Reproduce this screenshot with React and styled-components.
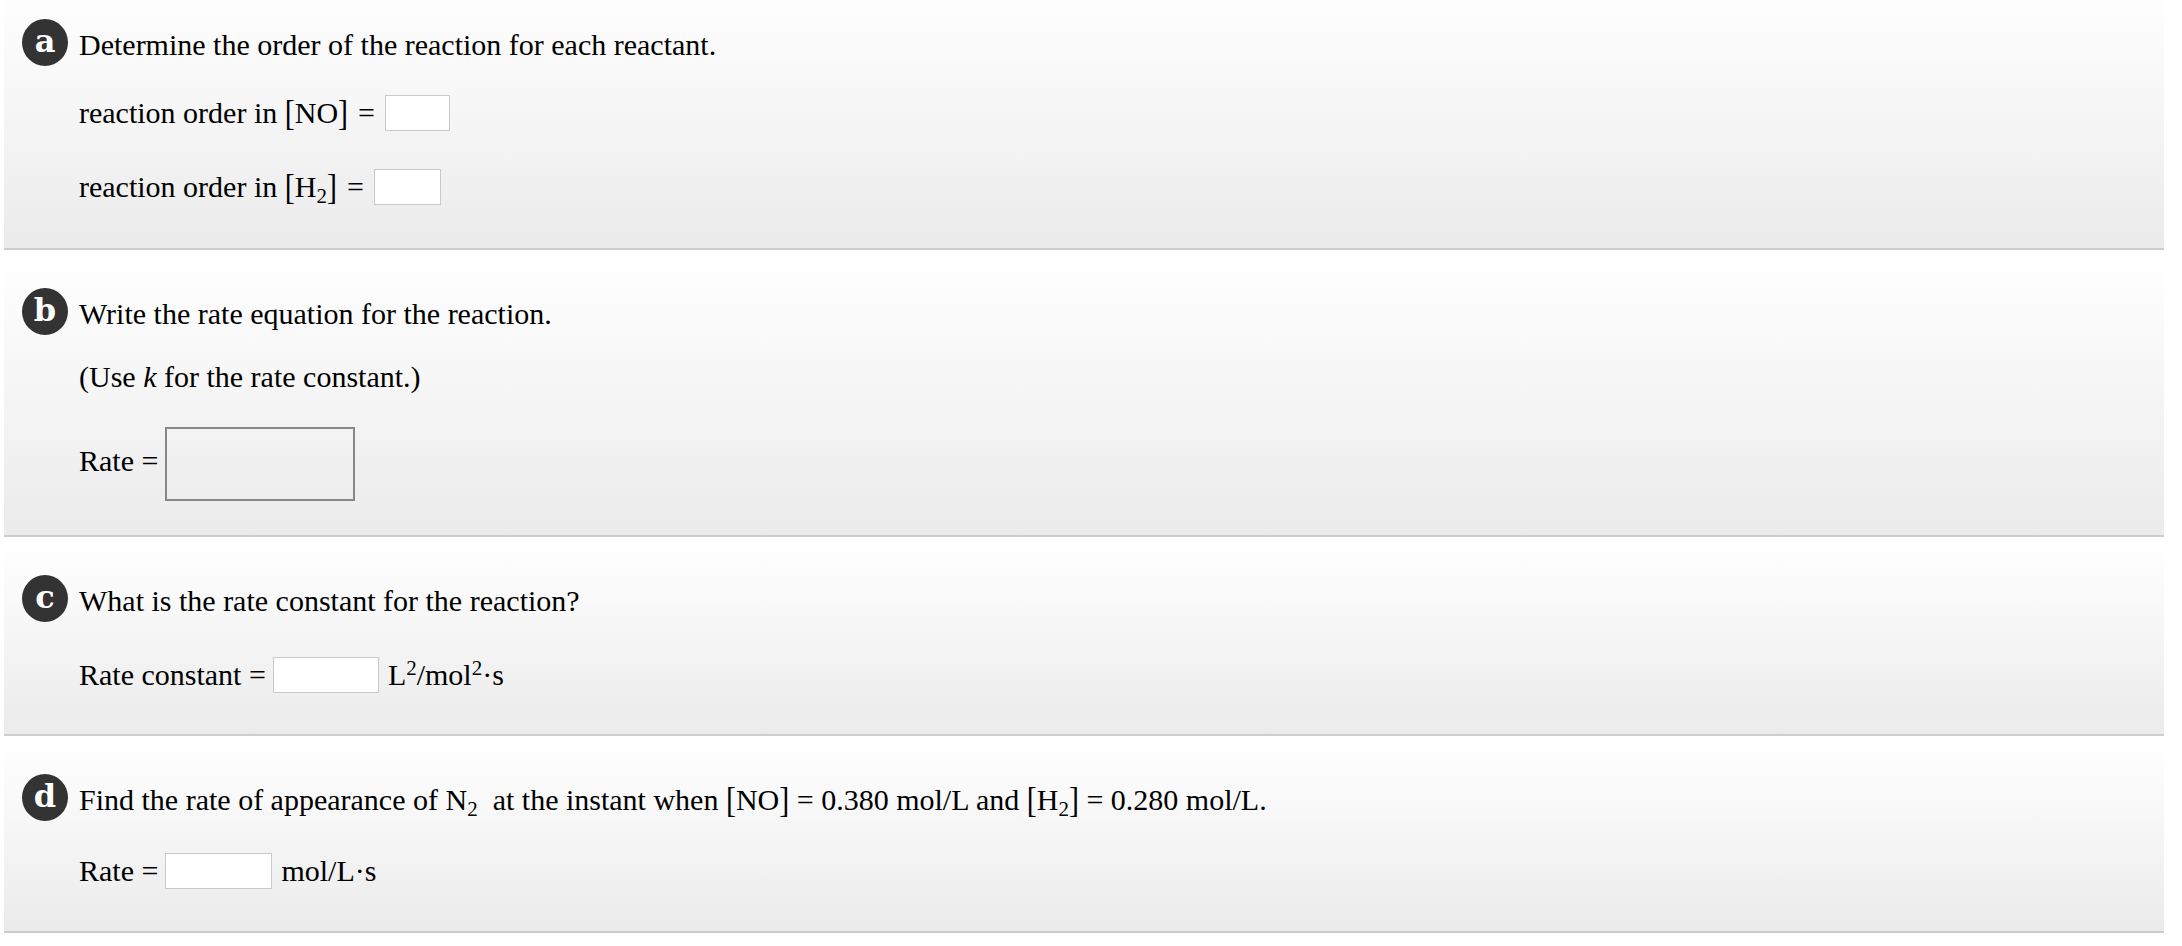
import React from 'react';
import styled, { createGlobalStyle } from 'styled-components';

const GlobalStyle = createGlobalStyle`
    html, body {
        margin: 0;
        padding: 0;
        background: #fff;
    }
    body {
        font-family: "Liberation Serif", "Times New Roman", serif;
        font-size: 30px;
        color: #000;
        overflow: hidden;
    }
`;

const Page = styled.div`
    padding: 0 18px 0 4px;
    margin-top: -19px;
`;

const Panel = styled.section`
    padding: 38px 0 ${props => props.bottom || 41}px 18px;
    background: linear-gradient(180deg, #ffffff 0%, #fcfcfc 18%, #ebebeb 100%);
    border-bottom: 2px solid #cdcdcd;
`;

const QuestionRow = styled.div`
    display: flex;
    align-items: flex-start;
    gap: 11px;
`;

const Badge = styled.span`
    flex: 0 0 auto;
    width: 46px;
    height: 47px;
    border-radius: 50%;
    background: #333;
    color: #fff;
    display: flex;
    align-items: center;
    justify-content: center;
    font-family: "DejaVu Serif", "Liberation Serif", serif;
    font-weight: bold;
    font-size: 32px;
    line-height: 1;
    padding-bottom: 3px;
    box-sizing: border-box;
`;

const QuestionText = styled.div`
    line-height: 46px;
    padding-top: 3px;
    white-space: nowrap;
`;

const Line = styled.div`
    display: flex;
    align-items: center;
    padding-left: 57px;
    margin-top: ${props => props.top || 0}px;
    line-height: 36px;
    white-space: nowrap;
`;

const Bracket = styled.span`
    display: inline-block;
    transform: scaleY(1.22);
    font-weight: 300;
`;

const Eq = styled.span`
    margin: 0 10px 0 10px;
`;

const Label = styled.span`
    margin-right: 7px;
    margin-bottom: ${props => props.lift || 0}px;
`;

const Unit = styled.span`
    margin-left: 9px;
`;

const Sub = styled.sub`
    font-size: 0.7em;
    vertical-align: -0.28em;
    line-height: 0;
`;

const Sup = styled.sup`
    font-size: 0.7em;
    vertical-align: 0.5em;
    line-height: 0;
`;

const AnswerBox = styled.span`
    display: inline-block;
    box-sizing: border-box;
    width: ${props => props.w}px;
    height: ${props => props.h || 36}px;
    background: ${props => (props.big ? 'transparent' : '#fff')};
    border: ${props => (props.big ? '2px solid #878787' : '1px solid #c9c9c9')};
`;

const Species = ({ children }) => (
    <span>
        <Bracket>[</Bracket>
        {children}
        <Bracket>]</Bracket>
    </span>
);

const App = () => (
    <Page>
        <GlobalStyle />
        <Panel bottom={43}>
            <QuestionRow>
                <Badge>a</Badge>
                <QuestionText>Determine the order of the reaction for each reactant.</QuestionText>
            </QuestionRow>
            <Line top={27}>
                reaction order in&nbsp;
                <Species>NO</Species>
                <Eq>=</Eq>
                <AnswerBox w={65} />
            </Line>
            <Line top={38}>
                reaction order in&nbsp;
                <Species>
                    H<Sub>2</Sub>
                </Species>
                <Eq>=</Eq>
                <AnswerBox w={67} />
            </Line>
        </Panel>

        <Panel bottom={34}>
            <QuestionRow>
                <Badge>b</Badge>
                <QuestionText>Write the rate equation for the reaction.</QuestionText>
            </QuestionRow>
            <Line top={22}>
                (Use&nbsp;<i>k</i>&nbsp;for the rate constant.)
            </Line>
            <Line top={32}>
                <Label lift={6}>Rate =</Label>
                <AnswerBox big w={190} h={74} />
            </Line>
        </Panel>

        <Panel bottom={41}>
            <QuestionRow>
                <Badge>c</Badge>
                <QuestionText>What is the rate constant for the reaction?</QuestionText>
            </QuestionRow>
            <Line top={33}>
                <Label>Rate constant =</Label>
                <AnswerBox w={106} />
                <Unit>
                    L<Sup>2</Sup>/mol<Sup>2</Sup>·s
                </Unit>
            </Line>
        </Panel>

        <Panel bottom={42}>
            <QuestionRow>
                <Badge>d</Badge>
                <QuestionText>
                    Find the rate of appearance of N<Sub>2</Sub>&nbsp; at the instant when{' '}
                    <Species>NO</Species> = 0.380 mol/L and{' '}
                    <Species>
                        H<Sub>2</Sub>
                    </Species>{' '}
                    = 0.280 mol/L.
                </QuestionText>
            </QuestionRow>
            <Line top={30}>
                <Label>Rate =</Label>
                <AnswerBox w={107} />
                <Unit>mol/L·s</Unit>
            </Line>
        </Panel>
    </Page>
);

export default App;
